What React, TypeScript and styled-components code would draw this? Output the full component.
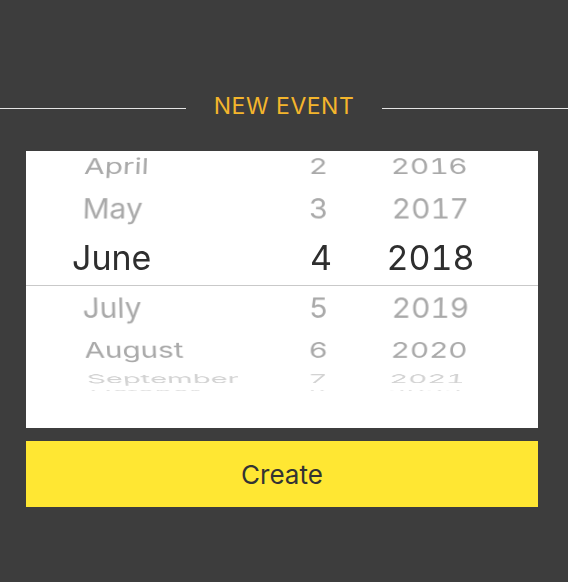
import React from "react";
import styled, { createGlobalStyle } from "styled-components";

const GlobalStyle = createGlobalStyle`
  html, body {
    margin: 0;
    padding: 0;
    background: #3d3d3d;
  }
  body {
    font-family: Inter, "Noto Sans", "Liberation Sans", sans-serif;
  }
`;

const Page = styled.div`
  min-height: 582px;
  box-sizing: border-box;
  padding-top: 91px;
  display: flex;
  flex-direction: column;
`;

const TitleRow = styled.div`
  display: flex;
  align-items: center;
  height: 30px;
`;

const Rule = styled.div`
  flex: 1;
  height: 1px;
  margin-top: 4px;
  background: #e4e4e4;
`;

const Title = styled.h1`
  margin: 0 28px;
  font-size: 23px;
  font-weight: 400;
  color: #f4b52c;
  letter-spacing: 0.5px;
  white-space: nowrap;
`;

const Card = styled.div`
  position: relative;
  margin: 30px 30px 0 26px;
  height: 277px;
  background: #ffffff;
  overflow: hidden;
  perspective: 3000px;
  perspective-origin: 50% 107px;
  display: grid;
  grid-template-columns: 207px 60px 163px;
  padding-left: 56px;

  &::after {
    content: "";
    position: absolute;
    left: 0;
    right: 0;
    top: 134px;
    height: 1px;
    background: #c9c9c9;
  }
`;

const Wheel = styled.div<{ $justify: string; $numeric: boolean }>`
  display: grid;
  align-content: start;
  justify-items: ${(p) => p.$justify};
  padding-top: 85px;
  transform-style: preserve-3d;
  font-variant-numeric: ${(p) => (p.$numeric ? "tabular-nums" : "normal")};
`;

const WheelItem = styled.div<{ $sel: boolean; $dist: number }>`
  grid-area: 1 / 1;
  height: 44px;
  line-height: 44px;
  font-size: ${(p) => (p.$sel ? 34 : 30)}px;
  font-weight: 400;
  white-space: nowrap;
  color: ${(p) =>
    p.$dist === 0
      ? "#2e2e2e"
      : p.$dist <= 2
      ? "#a9a9a9"
      : p.$dist === 3
      ? "#d3d3d3"
      : "#e2e2e2"};
  transform-origin: 50% 50% -139px;
  backface-visibility: hidden;
`;

const CreateButton = styled.button`
  margin: 13px 30px 0 26px;
  height: 66px;
  border: none;
  background: #ffe733;
  color: #333333;
  font-family: Inter, "Noto Sans", "Liberation Sans", sans-serif;
  font-size: 26px;
  font-weight: 400;
  cursor: pointer;
`;

type Column = {
  values: string[];
  selected: number;
  justify: string;
  shift: number;
  numeric: boolean;
};

const months = [
  "January", "February", "March", "April", "May", "June",
  "July", "August", "September", "October", "November", "December",
];
const days = Array.from({ length: 31 }, (_, i) => String(i + 1));
const years = Array.from({ length: 20 }, (_, i) => String(2008 + i));

const columns: Column[] = [
  { values: months, selected: 5, justify: "start", shift: -10, numeric: false },
  { values: days, selected: 3, justify: "center", shift: 2, numeric: true },
  { values: years, selected: 10, justify: "center", shift: 0, numeric: true },
];

const STEP = 21;

function PickerWheel({ col }: { col: Column }) {
  const items: React.ReactNode[] = [];
  for (let k = -4; k <= 4; k++) {
    const idx = col.selected + k;
    if (idx < 0 || idx >= col.values.length) continue;
    const sel = k === 0;
    items.push(
      <WheelItem
        key={idx}
        $sel={sel}
        $dist={Math.abs(k)}
        style={{
          transform: `translateX(${sel ? col.shift : 0}px) rotateX(${-k * STEP}deg)`,
        }}
      >
        {col.values[idx]}
      </WheelItem>
    );
  }
  return (
    <Wheel $justify={col.justify} $numeric={col.numeric}>
      {items}
    </Wheel>
  );
}

export default function App() {
  return (
    <>
      <GlobalStyle />
      <Page>
        <TitleRow>
          <Rule />
          <Title>NEW EVENT</Title>
          <Rule />
        </TitleRow>
        <Card>
          {columns.map((c, i) => (
            <PickerWheel key={i} col={c} />
          ))}
        </Card>
        <CreateButton>Create</CreateButton>
      </Page>
    </>
  );
}
